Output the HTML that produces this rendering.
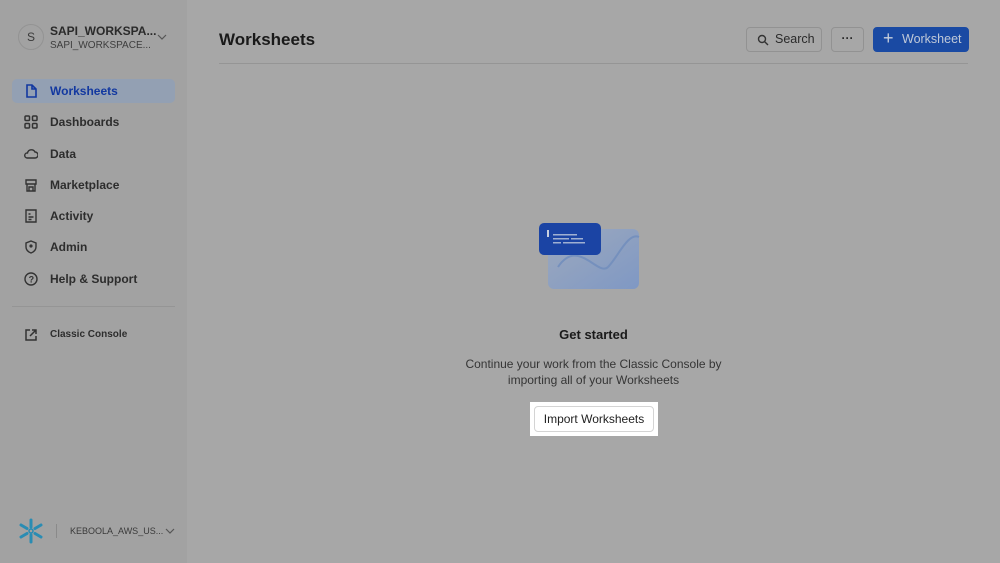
<!DOCTYPE html>
<html><head><meta charset="utf-8"><style>
*{box-sizing:border-box;margin:0;padding:0}
body{width:1000px;height:563px;overflow:hidden;background:#a7a7a7;font-family:"Liberation Sans",sans-serif;position:relative;color:#1e1e1e}
.side{position:absolute;left:0;top:0;width:187px;height:563px;background:#a2a2a2}
.av{position:absolute;left:18px;top:24px;width:26px;height:26px;border:1px solid #939393;border-radius:50%;font-size:12px;color:#3a3a3a;text-align:center;line-height:24px}
.nm{position:absolute;left:50px;top:24px;font-size:12px;font-weight:bold;color:#2a2a2a}
.sub{position:absolute;left:50px;top:40px;font-size:10px;color:#3e3e3e}
.item{position:absolute;left:12px;width:163px;height:24px;font-size:12px;font-weight:bold;color:#2d2d2d;line-height:24px;padding-left:38px}
.item svg{position:absolute;left:12px;top:5px}
.act{background:#93a0b3;border-radius:5px;color:#1238a0}
.hr{position:absolute;left:12px;width:163px;height:1px;background:#959595}
.top{position:absolute;left:219px;top:30px;font-size:17px;font-weight:bold;color:#1a1a1a}
.line{position:absolute;left:219px;top:63px;width:749px;height:1px;background:#959595}
.btn{position:absolute;top:27px;height:25px;border:1px solid #929292;border-radius:4px;font-size:12px;line-height:23px;color:#2a2a2a}
</style></head><body>
<div class="side">
<div class="av">S</div>
<div class="nm">SAPI_WORKSPA...</div>
<div class="sub">SAPI_WORKSPACE...</div>
<svg style="position:absolute;left:157px;top:33px" width="10" height="8"><path d="M1 2l4 4 4-4" stroke="#555" fill="none" stroke-width="1.2"/></svg>
<div class="item act" style="top:79px"><svg width="14" height="14"><path d="M3 1h5l4 4v8H3z M8 1v4h4" stroke="#1238a0" fill="none" stroke-width="1.6"/></svg>Worksheets</div>
<div class="item" style="top:110px"><svg width="14" height="14" fill="none" stroke="#333" stroke-width="1.5"><rect x="1" y="1" width="4.5" height="4.5" rx="1"/><rect x="8.5" y="1" width="4.5" height="4.5" rx="1"/><rect x="1" y="8.5" width="4.5" height="4.5" rx="1"/><rect x="8.5" y="8.5" width="4.5" height="4.5" rx="1"/></svg>Dashboards</div>
<div class="item" style="top:142px"><svg width="14" height="14"><path d="M3 11h8a3 3 0 0 0 0-6 4 4 0 0 0-7.5 1A2.5 2.5 0 0 0 3 11z" stroke="#333" fill="none" stroke-width="1.4"/></svg>Data</div>
<div class="item" style="top:173px"><svg width="14" height="14"><path d="M2 2h10v4H2z M3 6v7h8V6 M5 13v-4h4v4" stroke="#333" fill="none" stroke-width="1.4"/></svg>Marketplace</div>
<div class="item" style="top:204px"><svg width="14" height="14"><path d="M2 1h10v12H2z M4.5 5h2 M4.5 8h5 M4.5 10.5h3" stroke="#333" fill="none" stroke-width="1.4"/></svg>Activity</div>
<div class="item" style="top:235px"><svg width="14" height="14"><path d="M7 1l5 2v4c0 3-2.5 5-5 6-2.5-1-5-3-5-6V3z" stroke="#333" fill="none" stroke-width="1.4"/><circle cx="7" cy="6" r="1.6" fill="#333"/></svg>Admin</div>
<div class="item" style="top:267px"><svg width="14" height="14"><circle cx="7" cy="7" r="6" stroke="#333" fill="none" stroke-width="1.4"/><text x="4.6" y="10.5" font-size="9" font-weight="bold" fill="#333" font-family="Liberation Sans">?</text></svg>Help &amp; Support</div>
<div class="hr" style="top:306px"></div>
<div class="item" style="top:323px;font-size:10px"><svg width="14" height="14"><path d="M6 2H2v10h10V8 M8 2h4v4 M12 2L6 8" stroke="#333" fill="none" stroke-width="1.5"/></svg>Classic Console</div>
<svg style="position:absolute;left:18px;top:518px" width="26" height="26" stroke="#2a8cb3" stroke-width="3" stroke-linecap="round" fill="none"><path d="M13 2v7 M13 17v7 M3 7l6 3.5 M17 15.5l6 3.5 M3 19l6-3.5 M17 10.5l6-3.5"/><circle cx="13" cy="13" r="2" stroke-width="1.5"/></svg>
<div style="position:absolute;left:56px;top:524px;width:1px;height:14px;background:#8a8a8a"></div>
<div style="position:absolute;left:70px;top:526px;font-size:9px;color:#3a3a3a">KEBOOLA_AWS_US...</div>
<svg style="position:absolute;left:165px;top:528px" width="10" height="7"><path d="M1 1l4 4 4-4" stroke="#555" fill="none" stroke-width="1.2"/></svg>
</div>
<div class="top">Worksheets</div>
<div class="btn" style="left:746px;width:76px;padding-left:28px;font-size:12.5px"><svg style="position:absolute;left:10px;top:6px" width="12" height="12"><circle cx="5" cy="5" r="3.5" stroke="#333" fill="none" stroke-width="1.4"/><path d="M7.6 7.6L11 11" stroke="#333" stroke-width="1.4"/></svg>Search</div>
<div class="btn" style="left:831px;width:33px;text-align:center;font-weight:bold;line-height:20px">···</div>
<div class="btn" style="left:873px;width:96px;background:#1a4aa3;border-color:#1a4aa3;color:#c0c9d8;padding-left:28px;font-size:12.5px"><span style="position:absolute;left:9px;top:-1px;font-size:18px;color:#c7cfdc">+</span>Worksheet</div>
<div class="line"></div>
<svg style="position:absolute;left:538px;top:222px" width="104" height="70">
<defs><linearGradient id="g" x1="0" y1="0" x2="1" y2="1"><stop offset="0" stop-color="#9da9bd"/><stop offset="1" stop-color="#7f98c4"/></linearGradient></defs>
<rect x="10" y="7" width="91" height="60" rx="6" fill="url(#g)"/>
<path d="M20 45c20-30 40 10 50 0s20-35 31-30" stroke="#7590bd" fill="none" stroke-width="2"/>
<rect x="1" y="1" width="62" height="32" rx="5" fill="#1b44a4"/>
<rect x="9" y="8" width="2" height="7" fill="#c8d0e0"/>
<rect x="15" y="12" width="24" height="1.5" fill="#9fb0d2"/><rect x="15" y="16" width="16" height="1.5" fill="#9fb0d2"/><rect x="33" y="16" width="12" height="1.5" fill="#9fb0d2"/><rect x="15" y="20" width="8" height="1.5" fill="#9fb0d2"/><rect x="25" y="20" width="22" height="1.5" fill="#9fb0d2"/>
</svg>
<div style="position:absolute;left:0;width:1187px;text-align:center;top:327px;font-size:13px;font-weight:bold;color:#1a1a1a">Get started</div>
<div style="position:absolute;left:0;width:1187px;text-align:center;top:356px;font-size:12px;line-height:16px;color:#353535">Continue your work from the Classic Console by<br>importing all of your Worksheets</div>
<div style="position:absolute;left:530px;top:402px;width:128px;height:34px;background:#fff"></div>
<div style="position:absolute;left:534px;top:406px;width:120px;height:26px;border:1px solid #d4d4d4;border-radius:4px;background:#fff;font-size:12px;line-height:24px;text-align:center;color:#222">Import Worksheets</div>
</body></html>
